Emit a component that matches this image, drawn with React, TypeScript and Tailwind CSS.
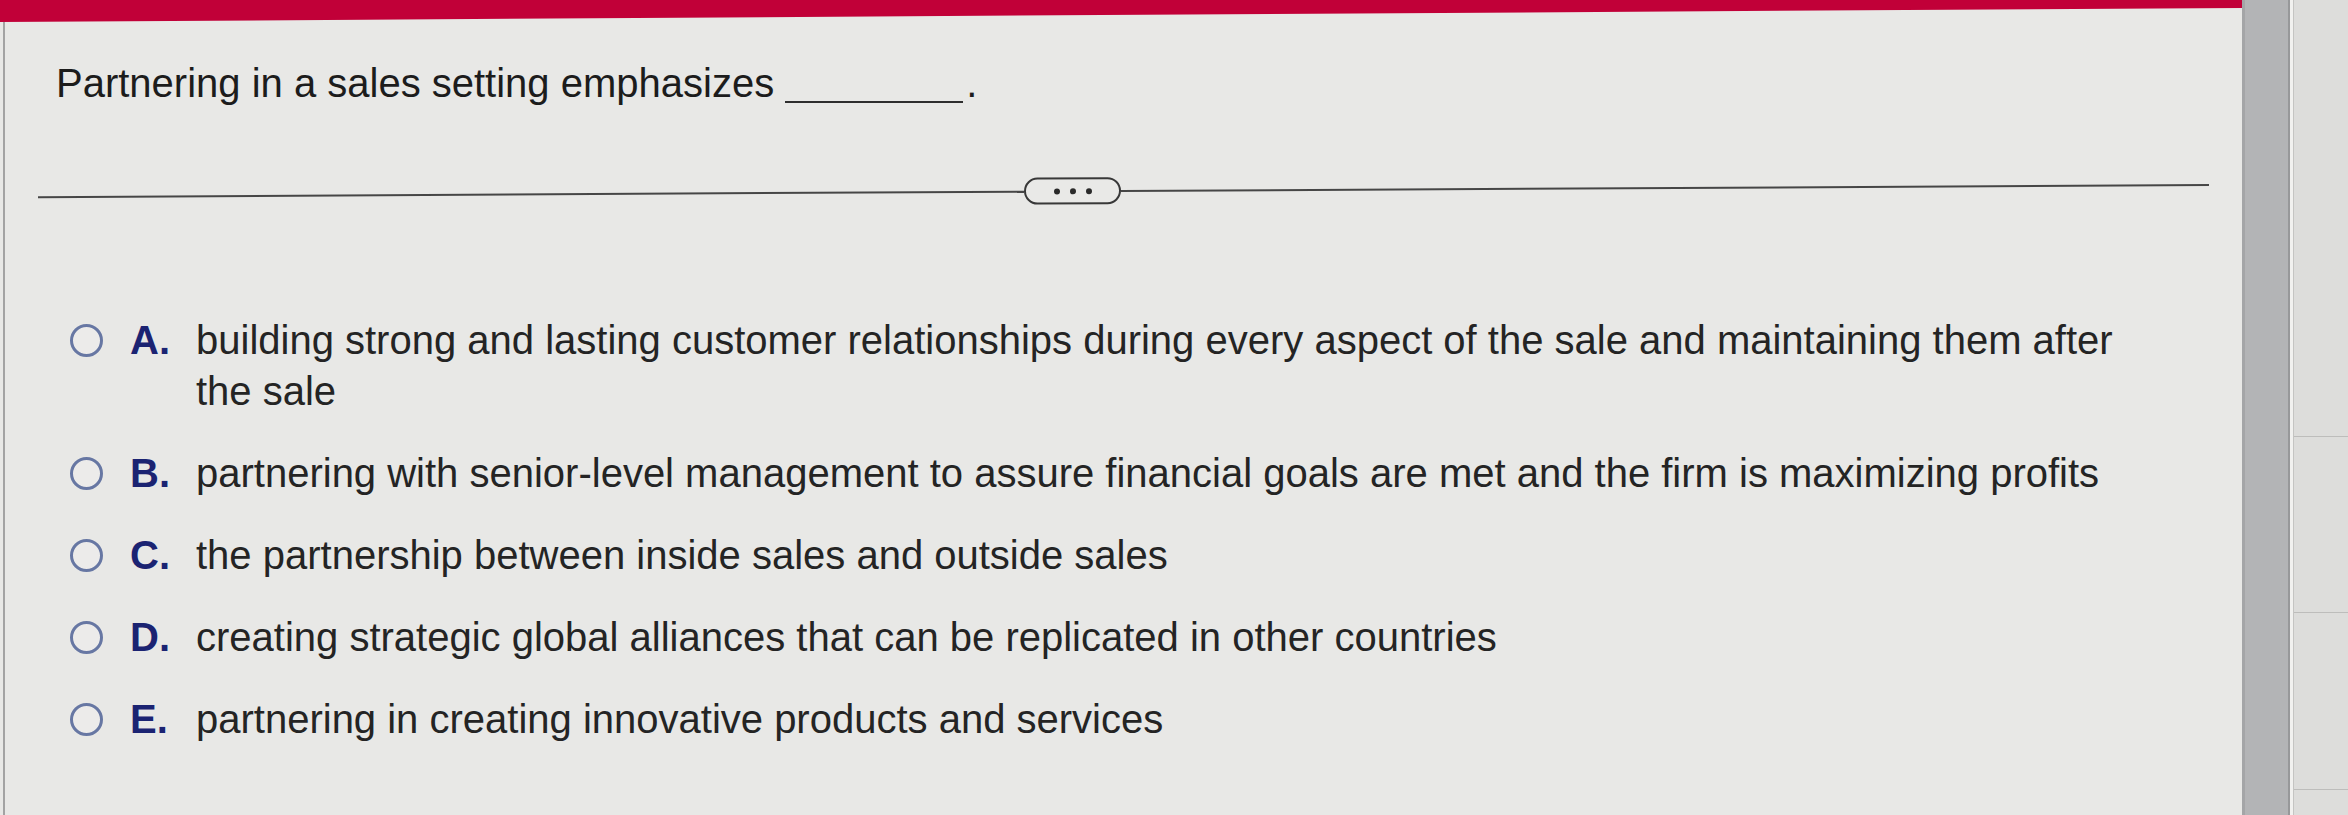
import React from "react";

const options: { letter: string; lines: string[] }[] = [
  {
    letter: "A.",
    lines: [
      "building strong and lasting customer relationships during every aspect of the sale and maintaining them after",
      "the sale",
    ],
  },
  {
    letter: "B.",
    lines: [
      "partnering with senior-level management to assure financial goals are met and the firm is maximizing profits",
    ],
  },
  { letter: "C.", lines: ["the partnership between inside sales and outside sales"] },
  {
    letter: "D.",
    lines: ["creating strategic global alliances that can be replicated in other countries"],
  },
  { letter: "E.", lines: ["partnering in creating innovative products and services"] },
];

function Radio() {
  return (
    <div className="mt-[9px] h-[33px] w-[33px] shrink-0 rounded-full border-[3px] border-[#6777a3] bg-[#ecebea]" />
  );
}

export default function App() {
  return (
    <div className="flex h-[815px] w-[2348px] overflow-hidden bg-[#dcdcda] font-['Liberation_Sans',Arial,sans-serif]">
      {/* main question panel */}
      <main className="flex w-[2242px] shrink-0 flex-col bg-[#e8e8e6]">
        <div className="h-[22px] w-full bg-[#c10038] [clip-path:polygon(0_0,100%_0,100%_36%,0_100%)]" />
        <div className="ml-[3px] flex flex-1 flex-col border-l-2 border-[#a3a3a3]">
          {/* question */}
          <p className="mt-[41px] pl-[51px] text-[40px] leading-[40px] text-[#1c1c1c]">
            Partnering in a sales setting emphasizes
            <span className="ml-[11px] inline-block h-[40px] w-[178px] border-b-2 border-[#2e2e2e] align-[-6px]" />
            <span className="ml-[3px]">.</span>
          </p>

          {/* divider with ellipsis pill */}
          <div className="mt-[74px] ml-[33px] flex rotate-[-0.32deg] items-center">
            <div className="h-[2px] w-[986px] bg-[#464646]" />
            <div className="flex h-[27px] w-[97px] items-center justify-center gap-[10px] rounded-full border-[2.5px] border-[#383838] bg-[#e9e9e7]">
              <span className="h-[6px] w-[6px] rounded-full bg-[#2a2a2a]" />
              <span className="h-[6px] w-[6px] rounded-full bg-[#2a2a2a]" />
              <span className="h-[6px] w-[6px] rounded-full bg-[#2a2a2a]" />
            </div>
            <div className="h-[2px] w-[1088px] bg-[#464646]" />
          </div>

          {/* options */}
          <div className="mt-[111px] ml-[65px] flex flex-col gap-[31px]">
            {options.map((o) => (
              <div key={o.letter} className="flex items-start">
                <Radio />
                <div className="ml-[27px] w-[66px] shrink-0 text-[40px] font-bold leading-[51px] text-[#1b2372]">
                  {o.letter}
                </div>
                <div className="text-[40px] leading-[51px] text-[#242424]">
                  {o.lines.map((l, i) => (
                    <div key={i} className="whitespace-nowrap">
                      {l}
                    </div>
                  ))}
                </div>
              </div>
            ))}
          </div>
        </div>
      </main>

      {/* scrollbar strip */}
      <div className="w-[48px] shrink-0 border-l-[3px] border-r-2 border-l-[#a4a5a7] border-r-[#97989a] bg-[#b3b4b6]" />
      <div className="w-[3px] shrink-0 bg-[#f1f1ef]" />

      {/* right neighbour panel */}
      <div className="flex flex-1 flex-col border-l border-[#c4c4c2] bg-[#dddddb]">
        <div className="h-[437px] border-b border-[#bdbdbb]" />
        <div className="h-[176px] border-b border-[#bdbdbb]" />
        <div className="h-[177px] border-b border-[#bdbdbb]" />
      </div>
    </div>
  );
}
